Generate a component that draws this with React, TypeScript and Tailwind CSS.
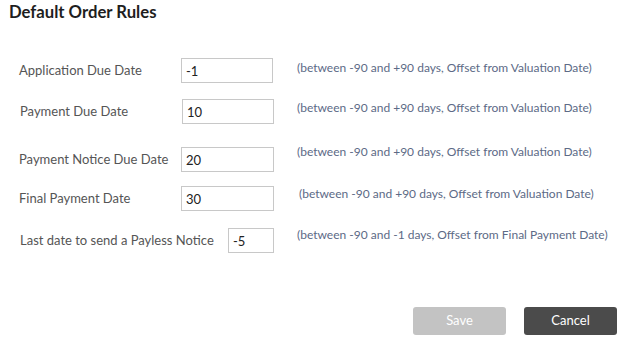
import React from "react";

const help = "text-[12px] text-[#5c6a86] whitespace-nowrap";
const label = "text-[13px] text-[#555] whitespace-nowrap";
const inp = "h-[25px] border border-[#c8c8c8] bg-white px-[4px] text-[13px] text-[#222] outline-none";

export default function App() {
  return (
    <div className="w-[643px] h-[351px] bg-white relative" style={{ fontFamily: "Lato, 'Open Sans', sans-serif" }}>
      <div className="pl-[9px] pt-[1px] text-[16.7px] font-bold text-[#1e1e1e] leading-[22px]">Default Order Rules</div>

      <div className="mt-[35px] flex items-start h-[25px]">
        <div className={`${label} pl-[19px] w-[181px] leading-[25px]`}>Application Due Date</div>
        <input className={`${inp} w-[92px]`} defaultValue="-1" />
        <div className={`${help} ml-[24px] mt-[1px] leading-[18px]`}>(between -90 and +90 days, Offset from Valuation Date)</div>
      </div>

      <div className="mt-[16px] flex items-start h-[25px]">
        <div className={`${label} pl-[20px] w-[182px] leading-[25px]`}>Payment Due Date</div>
        <input className={`${inp} w-[92px]`} defaultValue="10" />
        <div className={`${help} ml-[23px] mt-[0px] leading-[18px]`}>(between -90 and +90 days, Offset from Valuation Date)</div>
      </div>

      <div className="mt-[23px] flex items-start h-[25px]">
        <div className={`${label} pl-[19px] w-[181px] leading-[25px]`}>Payment Notice Due Date</div>
        <input className={`${inp} w-[93px]`} defaultValue="20" />
        <div className={`${help} ml-[23px] -mt-[4px] leading-[18px]`}>(between -90 and +90 days, Offset from Valuation Date)</div>
      </div>

      <div className="mt-[14px] flex items-start h-[25px]">
        <div className={`${label} pl-[19px] w-[181px] leading-[25px]`}>Final Payment Date</div>
        <input className={`${inp} w-[93px]`} defaultValue="30" />
        <div className={`${help} ml-[25px] -mt-[1px] leading-[18px]`}>(between -90 and +90 days, Offset from Valuation Date)</div>
      </div>

      <div className="mt-[17px] flex items-start h-[25px]">
        <div className={`${label} pl-[20px] w-[228px] leading-[25px]`}>Last date to send a Payless Notice</div>
        <input className={`${inp} w-[46px]`} defaultValue="-5" />
        <div className={`${help} ml-[23px] -mt-[2px] leading-[18px]`}>(between -90 and -1 days, Offset from Final Payment Date)</div>
      </div>

      <div className="mt-[54px] flex pl-[413px] gap-[18px]">
        <button className="w-[93px] h-[28px] rounded-[3px] bg-[#c3c3c3] text-white text-[13px]">Save</button>
        <button className="w-[93px] h-[28px] rounded-[3px] bg-[#4b4b4b] text-white text-[13px]">Cancel</button>
      </div>
    </div>
  );
}
